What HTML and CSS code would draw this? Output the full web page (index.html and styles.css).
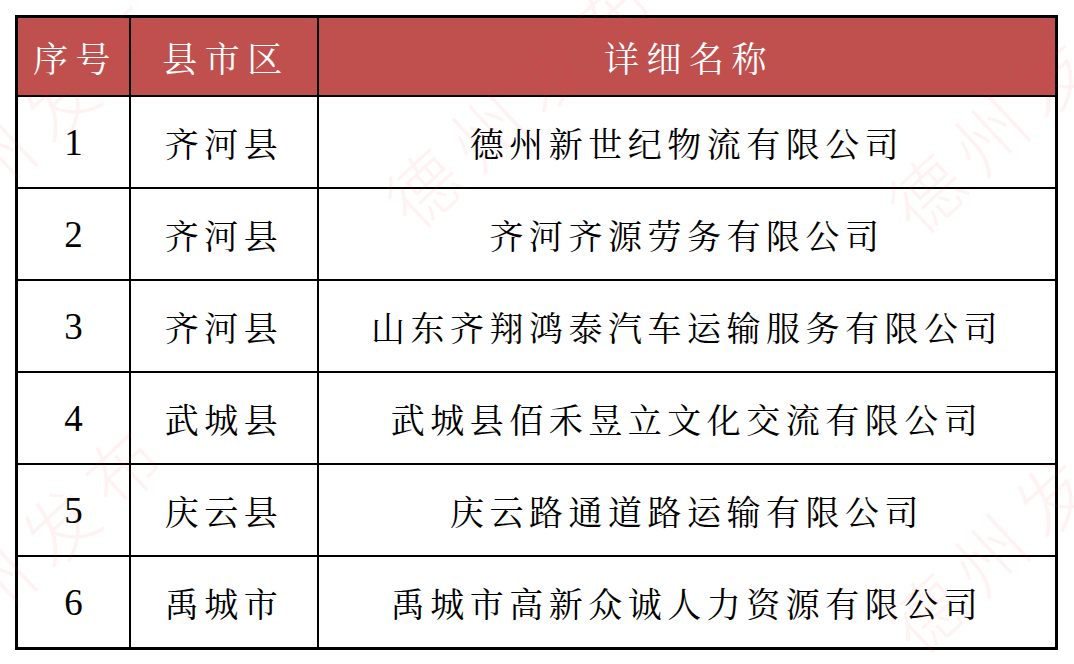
FILE: index.html
```html
<!DOCTYPE html>
<html lang="zh-CN">
<head>
<meta charset="utf-8">
<title>名单</title>
<link rel="stylesheet" href="styles.css">
</head>
<body>
<div class="page">
  <div class="sheet">
    <div class="cell head">序号</div>
    <div class="cell head">县市区</div>
    <div class="cell head">详细名称</div>

    <div class="cell num">1</div>
    <div class="cell">齐河县</div>
    <div class="cell">德州新世纪物流有限公司</div>

    <div class="cell num">2</div>
    <div class="cell">齐河县</div>
    <div class="cell">齐河齐源劳务有限公司</div>

    <div class="cell num">3</div>
    <div class="cell">齐河县</div>
    <div class="cell">山东齐翔鸿泰汽车运输服务有限公司</div>

    <div class="cell num">4</div>
    <div class="cell">武城县</div>
    <div class="cell">武城县佰禾昱立文化交流有限公司</div>

    <div class="cell num">5</div>
    <div class="cell">庆云县</div>
    <div class="cell">庆云路通道路运输有限公司</div>

    <div class="cell num">6</div>
    <div class="cell">禹城市</div>
    <div class="cell">禹城市高新众诚人力资源有限公司</div>
  </div>

  <span class="mark m1">德州发布</span>
  <span class="mark m2">德州发布</span>
  <span class="mark m3">德州发布</span>
  <span class="mark m4">德州发布</span>
  <span class="mark m5">德州发布</span>
</div>
</body>
</html>
```
FILE: styles.css
```css
html, body {
  margin: 0;
  padding: 0;
  background: #ffffff;
}

.page {
  position: relative;
  width: 1074px;
  height: 664px;
  overflow: hidden;
  padding: 15px 0 0 15px;
  box-sizing: border-box;
}

.sheet {
  display: grid;
  grid-template-columns: 111px 186px 736px;
  grid-template-rows: 77px repeat(6, 90px);
  gap: 2px;
  padding: 3px;
  width: 1043px;
  box-sizing: border-box;
  background: #000000;
}

.cell {
  background: #ffffff;
  display: flex;
  align-items: center;
  justify-content: center;
  font-family: "Liberation Serif", "Noto Serif CJK SC", "Noto Sans CJK SC", serif;
  font-size: 34px;
  letter-spacing: 5.5px;
  color: #000000;
  white-space: nowrap;
}

.head {
  background: #c0504d;
  color: #ffffff;
  font-size: 35px;
  letter-spacing: 7.5px;
  padding-left: 4px;
}

.num {
  font-size: 37px;
  letter-spacing: 0;
}

.mark {
  position: absolute;
  font-family: "Noto Sans CJK SC", sans-serif;
  font-weight: 300;
  font-size: 72px;
  letter-spacing: 14px;
  color: rgba(235, 60, 60, 0.065);
  white-space: nowrap;
  transform: rotate(-43deg);
  transform-origin: 0 50%;
  pointer-events: none;
  line-height: 1;
}

.m1 { left: -95px; top: 205px; }
.m2 { left: 395px; top: 175px; }
.m3 { left: 898px; top: 180px; }
.m4 { left: -95px; top: 630px; }
.m5 { left: 898px; top: 600px; }
```
